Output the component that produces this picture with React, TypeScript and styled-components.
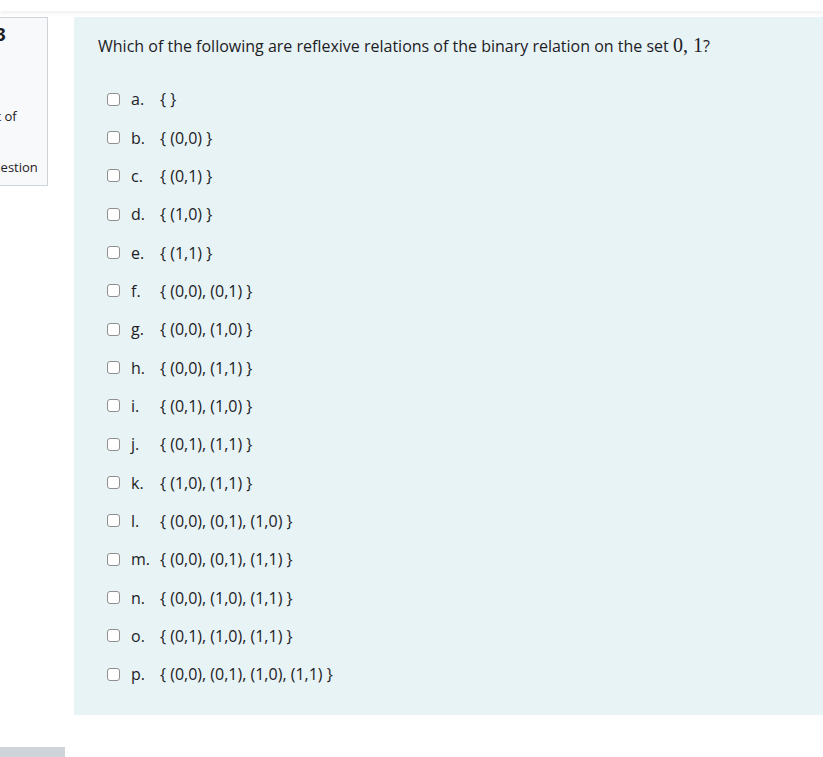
import React from "react";
import styled, { createGlobalStyle } from "styled-components";

const Global = createGlobalStyle`
  html, body { margin: 0; padding: 0; background: #fff; overflow: hidden; }
  body { font-family: "Open Sans", "Noto Sans", sans-serif; color: #1d2125; }
`;

const Page = styled.div`
  width: 823px;
  height: 757px;
  display: flex;
  flex-direction: column;
  overflow: hidden;
`;

const TopBar = styled.div`
  height: 11px;
  background: #fff;
  box-shadow: 0 2px 4px rgba(0, 0, 0, 0.07);
  flex-shrink: 0;
`;

const Main = styled.div`
  display: flex;
  align-items: flex-start;
  margin-top: 6px;
`;

const InfoBox = styled.div`
  flex-shrink: 0;
  width: 126px;
  height: 169px;
  margin-left: -78px;
  box-sizing: border-box;
  padding: 5px 8px 8px 8px;
  background: #f8f9fa;
  border: 1px solid #ced4da;
  font-size: 13px;
  line-height: 1.5;
  color: #1d2125;
  overflow: hidden;
`;

const QNo = styled.div`
  font-size: 14px;
  line-height: 22px;
  margin-bottom: 60px;
  white-space: nowrap;
  b { font-weight: 700; font-size: 18px; margin-left: 5px; }
`;

const InfoLine = styled.div<{ $gap?: number }>`
  margin-bottom: ${(p) => p.$gap ?? 0}px;
  white-space: nowrap;
`;

const FlagLink = styled.div`
  display: flex;
  align-items: center;
  gap: 4px;
  color: #1d2125;
  white-space: nowrap;
`;

const FlagIcon = styled.span`
  width: 22px;
  height: 16px;
  flex-shrink: 0;
`;

const Panel = styled.div`
  flex: 1;
  margin-left: 26px;
  margin-right: -20px;
  background: #e7f3f5;
  padding: 17px 24px 23px 24px;
  box-sizing: border-box;
  height: 698px;
`;

const QText = styled.div`
  font-size: 16px;
  line-height: 22px;
  color: #1d2125;
  margin-bottom: 23px;
`;

const Math = styled.span`
  font-family: "Liberation Serif", "DejaVu Serif", serif;
  font-size: 20px;
`;

const Answers = styled.div`
  display: flex;
  flex-direction: column;
  padding-left: 9px;
`;

const Row = styled.label`
  display: flex;
  align-items: center;
  height: 38.35px;
  font-size: 16px;
  color: #1d2125;
`;

const Box = styled.span`
  width: 13px;
  height: 13px;
  box-sizing: border-box;
  border: 1px solid #8f8f8f;
  border-radius: 3px;
  background: #fff;
  margin-right: 11px;
  flex-shrink: 0;
`;

const Num = styled.span`
  width: 29px;
  flex-shrink: 0;
`;

const FooterBar = styled.div`
  margin-top: 32px;
  width: 65px;
  height: 10px;
  background: #ced4da;
`;

const options: [string, string][] = [
  ["a.", "{ }"],
  ["b.", "{ (0,0) }"],
  ["c.", "{ (0,1) }"],
  ["d.", "{ (1,0) }"],
  ["e.", "{ (1,1) }"],
  ["f.", "{ (0,0), (0,1) }"],
  ["g.", "{ (0,0), (1,0) }"],
  ["h.", "{ (0,0), (1,1) }"],
  ["i.", "{ (0,1), (1,0) }"],
  ["j.", "{ (0,1), (1,1) }"],
  ["k.", "{ (1,0), (1,1) }"],
  ["l.", "{ (0,0), (0,1), (1,0) }"],
  ["m.", "{ (0,0), (0,1), (1,1) }"],
  ["n.", "{ (0,0), (1,0), (1,1) }"],
  ["o.", "{ (0,1), (1,0), (1,1) }"],
  ["p.", "{ (0,0), (0,1), (1,0), (1,1) }"],
];

export default function App() {
  return (
    <>
      <Global />
      <Page>
        <TopBar />
        <Main>
          <InfoBox>
            <QNo>
              Question<b>3</b>
            </QNo>
            <InfoLine $gap={31}>Marked out of</InfoLine>
            <FlagLink>
              <FlagIcon />
              <span>Flag question</span>
            </FlagLink>
          </InfoBox>
          <Panel>
            <QText>
              Which of the following are reflexive relations of the binary relation on the set{" "}
              <Math>0, 1</Math>?
            </QText>
            <Answers>
              {options.map(([n, t]) => (
                <Row key={n}>
                  <Box />
                  <Num>{n}</Num>
                  <span>{t}</span>
                </Row>
              ))}
            </Answers>
          </Panel>
        </Main>
        <FooterBar />
      </Page>
    </>
  );
}
